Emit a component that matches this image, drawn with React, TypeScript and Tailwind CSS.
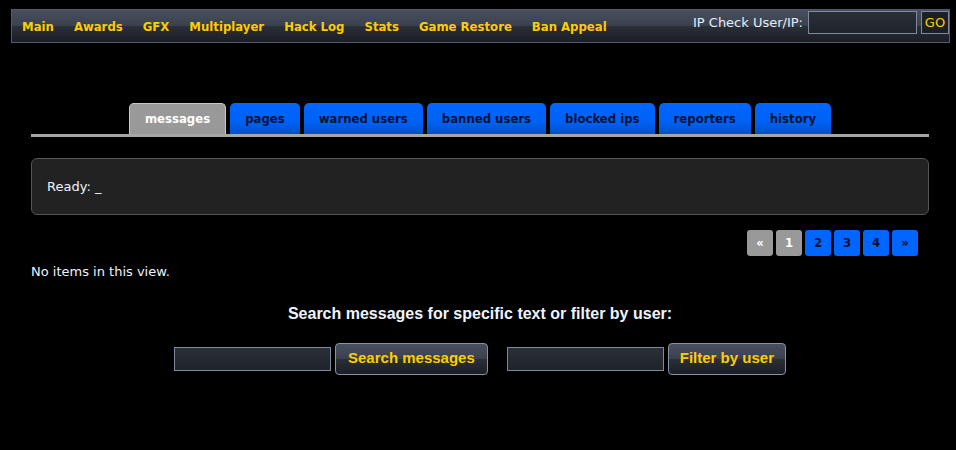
import React from "react";

const navLinks = ["Main", "Awards", "GFX", "Multiplayer", "Hack Log", "Stats", "Game Restore", "Ban Appeal"];
const tabs = ["messages", "pages", "warned users", "banned users", "blocked ips", "reporters", "history"];
const pages = [
  { label: "«", active: false },
  { label: "1", active: false },
  { label: "2", active: true },
  { label: "3", active: true },
  { label: "4", active: true },
  { label: "»", active: true },
];

const glossy =
  "bg-[linear-gradient(to_bottom,#474f5e_0%,#3b414e_48%,#2a2e37_52%,#1b1e25_100%)]";
const fieldBg =
  "bg-[linear-gradient(to_bottom,#2a2f38_0%,#1f232a_100%)]";
const tahoma = "font-['DejaVu_Sans_Condensed','DejaVu_Sans',sans-serif] font-stretch-condensed";

export default function App() {
  return (
    <div className="min-h-[450px] bg-black pt-[9px] font-['DejaVu_Sans',sans-serif]">
      <div className={`ml-[11px] mr-[6px] h-[34px] border border-[#4d5a72] ${glossy} flex items-center justify-between pl-[10px] pr-0`}>
        <nav className={`flex items-center gap-[20px] pt-[2px] ${tahoma}`}>
          {navLinks.map((link) => (
            <a key={link} className="text-[13px] font-bold text-[#ffcc00] cursor-pointer">
              {link}
            </a>
          ))}
        </nav>
        <div className="flex items-center self-start pt-[1px]">
          <span className="text-[13px] text-[#e6eef7] mr-[5px]">IP Check User/IP:</span>
          <input className={`w-[109px] h-[23px] border border-[#7d8a9c] ${fieldBg} outline-none`} />
          <button className="ml-[4px] w-[28px] h-[23px] border border-[#7d8a9c] bg-[#1c1f26] text-[13px] text-[#ffcc00]">
            GO
          </button>
        </div>
      </div>

      <div className="ml-[31px] mr-[27px] mt-[60px]">
        <div className={`flex justify-center gap-[4px] ${tahoma}`}>
          {tabs.map((tab, i) => (
            <div
              key={tab}
              className={
                i === 0
                  ? "h-[31px] px-[15px] flex items-center rounded-t-[5px] border border-[#c8c8c8] border-b-0 bg-[#999999] text-white text-[13px] font-bold"
                  : "h-[31px] px-[15px] flex items-center rounded-t-[5px] bg-[linear-gradient(to_bottom,#0066ff_0%,#0062f5_60%,#0050cc_100%)] text-[#001133] text-[13px] font-bold"
              }
            >
              {tab}
            </div>
          ))}
        </div>
        <div className="h-[3px] bg-[#a6a6a6]" />

        <div className="mt-[21px] h-[57px] rounded-[6px] border border-[#555] bg-[#222] flex items-center px-[15px] pt-[1px]">
          <span className="text-[13px] text-[#eef4ff]">Ready: _</span>
        </div>

        <div className={`mt-[15px] flex justify-end gap-[3px] pr-[11px] ${tahoma}`}>
          {pages.map((p) => (
            <div
              key={p.label}
              className={
                p.active
                  ? "w-[26px] h-[26px] rounded-[3px] bg-[#0066ff] text-[#001133] text-[13px] font-bold flex items-center justify-center"
                  : "w-[26px] h-[26px] rounded-[3px] bg-[#999] text-white text-[13px] font-bold flex items-center justify-center"
              }
            >
              {p.label}
            </div>
          ))}
        </div>

        <p className="mt-[6px] text-[13px] text-[#eef4ff]">No items in this view.</p>

        <h2 className="mt-[20px] text-center text-[16px] font-bold text-[#eef4ff] font-['Liberation_Sans',Arial,sans-serif]">
          Search messages for specific text or filter by user:
        </h2>

        <div className="mt-[17px] flex justify-center items-center gap-[19px]">
          <div className="flex items-center gap-[4px]">
            <input className={`w-[157px] h-[24px] border border-[#7d8a9c] ${fieldBg} outline-none`} />
            <button className={`h-[32px] px-[12px] rounded-[4px] border border-[#8593a6] ${glossy} text-[15px] font-bold text-[#ffcc00] font-['Liberation_Sans',Arial,sans-serif]`}>
              Search messages
            </button>
          </div>
          <div className="flex items-center gap-[4px]">
            <input className={`w-[157px] h-[24px] border border-[#7d8a9c] ${fieldBg} outline-none`} />
            <button className={`h-[32px] px-[11px] rounded-[4px] border border-[#8593a6] ${glossy} text-[15px] font-bold text-[#ffcc00] font-['Liberation_Sans',Arial,sans-serif]`}>
              Filter by user
            </button>
          </div>
        </div>
      </div>
    </div>
  );
}
